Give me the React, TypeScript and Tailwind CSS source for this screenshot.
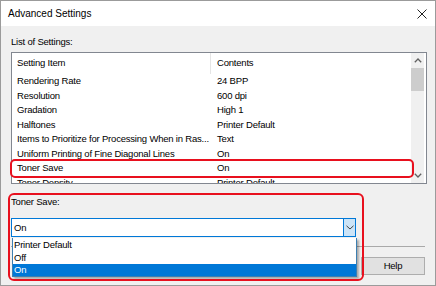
import React from 'react';

const rows = [
  ['Rendering Rate', '24 BPP'],
  ['Resolution', '600 dpi'],
  ['Gradation', 'High 1'],
  ['Halftones', 'Printer Default'],
  ['Items to Prioritize for Processing When in Ras...', 'Text'],
  ['Uniform Printing of Fine Diagonal Lines', 'On'],
  ['Toner Save', 'On'],
  ['Toner Density', 'Printer Default'],
];

function Chevron({ up = false, className = '' }: { up?: boolean; className?: string }) {
  return (
    <svg width="8" height="5" viewBox="0 0 8 5" className={className}>
      <path
        d={up ? 'M0.8 4.2 L4 1 L7.2 4.2' : 'M0.8 0.8 L4 4 L7.2 0.8'}
        fill="none"
        stroke="#606060"
        strokeWidth="1.3"
      />
    </svg>
  );
}

export default function App() {
  return (
    <div className="relative w-[436px] h-[286px] overflow-hidden bg-[#f0f0f0] border border-[#9b9b9b] font-['Liberation_Sans',Arial,sans-serif] text-[9.5px] tracking-[-0.2px] text-black">
      {/* Title bar */}
      <div className="h-[25px] bg-white flex items-center justify-between pl-[7px] pr-[8px]">
        <span className="text-[10px] tracking-normal">Advanced Settings</span>
        <svg width="10" height="10" viewBox="0 0 10 10">
          <path d="M0.5 0.5 L9.5 9.5 M9.5 0.5 L0.5 9.5" stroke="#222" strokeWidth="1" />
        </svg>
      </div>

      <div className="px-[10px] pt-[9px]">
        <div className="leading-[14px]">List of Settings:</div>

        {/* Settings list */}
        <div className="mt-[3px] w-[416px] h-[132px] border border-[#828790] bg-white flex">
          <div className="flex-1 overflow-hidden">
            <div className="h-[21px] flex items-center">
              <div className="w-[198px] pl-[5px]">Setting Item</div>
              <div className="w-px h-full bg-[#e5e5e5]" />
              <div className="pl-[6px]">Contents</div>
            </div>
            {rows.map(([item, value]) => (
              <div key={item} className="h-[14.5px] leading-[14.5px] flex whitespace-nowrap">
                <div className="w-[199px] pl-[5px] overflow-hidden">{item}</div>
                <div className="pl-[6px]">{value}</div>
              </div>
            ))}
          </div>
          <div className="w-[13px] mr-[2px] bg-[#f0f0f0] flex flex-col">
            <div className="h-[15px] flex items-center justify-center">
              <Chevron up />
            </div>
            <div className="h-[23px] bg-[#cdcdcd]" />
            <div className="flex-1" />
            <div className="h-[15px] flex items-center justify-center">
              <Chevron />
            </div>
          </div>
        </div>

        <div className="mt-[11px] leading-[14px]">Toner Save:</div>

        {/* Combo box */}
        <div className="mt-[9px] w-[345px] h-[19px] border border-[#0078d7] bg-white flex">
          <div className="flex-1 pl-[2px] leading-[17px]">On</div>
          <div className="w-[12px] border-l border-[#0078d7] bg-[#cce4f7] flex items-center justify-center">
            <svg width="8" height="5" viewBox="0 0 8 5">
              <path d="M0.5 0.8 L4 4 L7.5 0.8" fill="none" stroke="#444" strokeWidth="1" />
            </svg>
          </div>
        </div>

        <div className="mt-[9px] h-px bg-[#a9a9a9]" />

        <div className="mt-[10px] flex justify-end gap-[6px]">
          {['OK', 'Cancel', 'Help'].map((label) => (
            <button
              key={label}
              className="w-[64px] h-[18px] bg-[#e1e1e1] border border-[#adadad] text-[9.5px]"
            >
              {label}
            </button>
          ))}
        </div>
      </div>

      {/* Open drop-down list */}
      <div className="absolute left-[11px] top-[237px] w-[345px] bg-white border-x border-b border-[#3c7fb1] shadow-[2px_2px_2px_rgba(0,0,0,0.3)]">
        <div className="h-[13px] leading-[13px] pl-[1px]">Printer Default</div>
        <div className="h-[13px] leading-[13px] pl-[1px]">Off</div>
        <div className="h-[12px] leading-[12px] pl-[1px] bg-[#0078d7] text-white">On</div>
      </div>

      {/* Highlight frames */}
      <div className="absolute left-[9px] top-[158px] w-[404px] h-[19px] border-2 border-[#e8101e] rounded-[5px]" />
      <div className="absolute left-[7px] top-[192px] w-[356px] h-[88px] border-2 border-[#e8101e] rounded-[6px]" />
    </div>
  );
}
